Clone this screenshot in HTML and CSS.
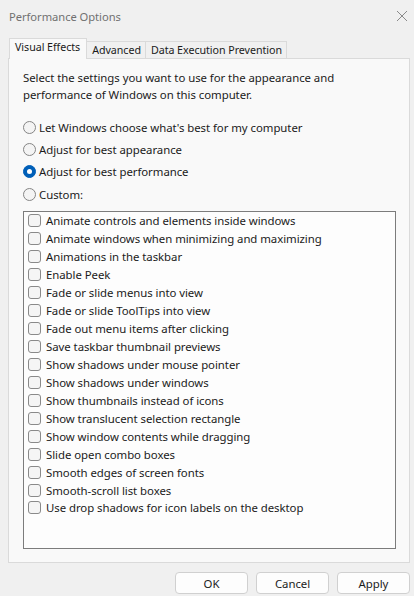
FILE: index.html
```html
<!DOCTYPE html>
<html>
<head>
<meta charset="utf-8">
<link rel="stylesheet" href="styles.css">
</head>
<body>
<div class="window">
  <div class="titlebar">
    <span class="title">Performance Options</span>
    <svg class="close" width="12" height="12" viewBox="0 0 12 12"><path d="M1 1 L11 11 M11 1 L1 11" stroke="#8a8a8a" stroke-width="1" fill="none"/></svg>
  </div>
  <div class="tabs">
    <div class="tab active">Visual Effects</div>
    <div class="tab">Advanced</div>
    <div class="tab">Data Execution Prevention</div>
  </div>
  <div class="panel">
    <p class="intro">Select the settings you want to use for the appearance and performance of Windows on this computer.</p>
    <div class="radios">
      <div class="radio"><span class="dot"></span>Let Windows choose what's best for my computer</div>
      <div class="radio"><span class="dot"></span>Adjust for best appearance</div>
      <div class="radio"><span class="dot on"></span>Adjust for best performance</div>
      <div class="radio custom"><span class="dot"></span>Custom:</div>
    </div>
    <div class="listbox">
      <div class="row"><span class="box"></span>Animate controls and elements inside windows</div>
      <div class="row"><span class="box"></span>Animate windows when minimizing and maximizing</div>
      <div class="row"><span class="box"></span>Animations in the taskbar</div>
      <div class="row"><span class="box"></span>Enable Peek</div>
      <div class="row"><span class="box"></span>Fade or slide menus into view</div>
      <div class="row"><span class="box"></span>Fade or slide ToolTips into view</div>
      <div class="row"><span class="box"></span>Fade out menu items after clicking</div>
      <div class="row"><span class="box"></span>Save taskbar thumbnail previews</div>
      <div class="row"><span class="box"></span>Show shadows under mouse pointer</div>
      <div class="row"><span class="box"></span>Show shadows under windows</div>
      <div class="row"><span class="box"></span>Show thumbnails instead of icons</div>
      <div class="row"><span class="box"></span>Show translucent selection rectangle</div>
      <div class="row"><span class="box"></span>Show window contents while dragging</div>
      <div class="row"><span class="box"></span>Slide open combo boxes</div>
      <div class="row"><span class="box"></span>Smooth edges of screen fonts</div>
      <div class="row"><span class="box"></span>Smooth-scroll list boxes</div>
      <div class="row"><span class="box"></span>Use drop shadows for icon labels on the desktop</div>
    </div>
  </div>
  <div class="buttons">
    <div class="btn">OK</div>
    <div class="btn">Cancel</div>
    <div class="btn">Apply</div>
  </div>
</div>
</body>
</html>
```
FILE: styles.css
```css
* { box-sizing: border-box; }
html, body {
  margin: 0;
  padding: 0;
  background: #f0f0f0;
}
body {
  width: 414px;
  height: 596px;
  overflow: hidden;
  font-family: "Noto Sans", "Open Sans", sans-serif;
  font-size: 11.4px;
  letter-spacing: -0.05px;
  color: #1b1b1b;
}
.window {
  width: 414px;
  height: 596px;
  display: flex;
  flex-direction: column;
}
.titlebar {
  height: 32px;
  display: flex;
  align-items: center;
  justify-content: space-between;
  padding: 0 6px 0 9px;
}
.title {
  color: #707070;
  font-size: 11.2px;
}
.close { display: block; }
.tabs {
  height: 26px;
  padding-top: 6px;
  padding-left: 9px;
  display: flex;
  align-items: flex-end;
  font-size: 10.7px;
}
.tab {
  height: 17px;
  padding: 0 4px 0 5px;
  border: 1px solid #dadada;
  border-bottom: none;
  border-left: none;
  background: #f0f0f0;
  line-height: 16px;
}
.tab.active {
  height: 21px;
  margin-bottom: -1px;
  border-left: 1px solid #dadada;
  background: #f9f9f9;
  line-height: 17px;
  padding: 0 6px 0 5px;
  position: relative;
  z-index: 1;
}
.panel {
  margin-left: 8px;
  width: 402px;
  height: 505px;
  background: #f9f9f9;
  border: 1px solid #dadada;
  padding: 10px 0 0 14px;
}
.intro {
  margin: 0;
  line-height: 17px;
  width: 330px;
}
.radios {
  margin-top: 13px;
  display: flex;
  flex-direction: column;
}
.radio {
  height: 22px;
  display: flex;
  align-items: center;
}
.radio.custom { height: 23px; margin-top: 1px; }
.dot {
  width: 13px;
  height: 13px;
  border-radius: 50%;
  border: 1px solid #858585;
  background: #f4f4f4;
  margin-right: 3px;
  position: relative;
  flex: none;
}
.dot.on {
  background: #005fb8;
  border-color: #005fb8;
}
.dot.on::after {
  content: "";
  position: absolute;
  left: 3px;
  top: 3px;
  width: 5px;
  height: 5px;
  border-radius: 50%;
  background: #fff;
}
.listbox {
  margin-top: 5px;
  width: 373px;
  height: 338px;
  border: 1px solid #7c7c7c;
  background: #fdfdfd;
  padding: 0 0 0 4px;
}
.row {
  height: 17.95px;
  display: flex;
  align-items: center;
}
.box {
  width: 13px;
  height: 13px;
  border: 1px solid #8a8a8a;
  border-radius: 3px;
  background: #f5f5f5;
  margin-right: 5px;
  flex: none;
}
.buttons {
  margin-top: 9px;
  display: flex;
  justify-content: flex-end;
  gap: 8px;
  padding-right: 4px;
}
.btn {
  width: 73px;
  height: 22px;
  border: 1px solid #d0d0d0;
  border-radius: 4px;
  background: #fdfdfd;
  display: flex;
  align-items: center;
  justify-content: center;
}
```
